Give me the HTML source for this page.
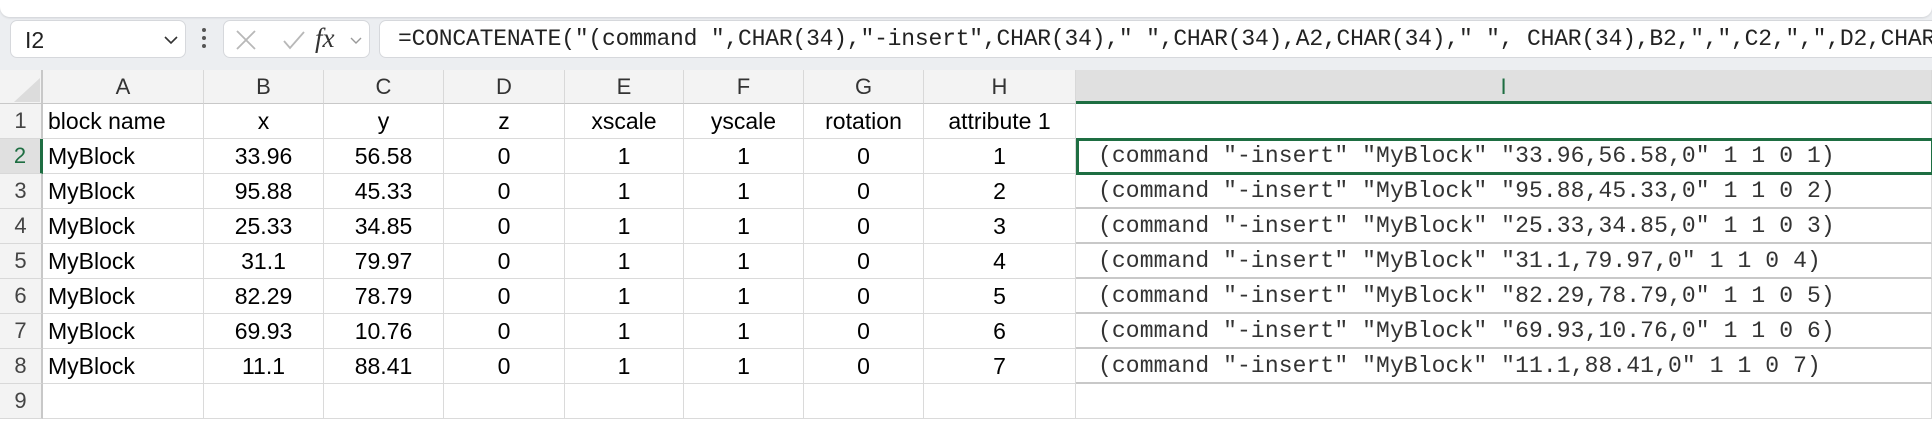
<!DOCTYPE html>
<html><head><meta charset="utf-8"><style>
*{box-sizing:border-box;margin:0;padding:0}
body{width:1932px;height:421px;overflow:hidden;background:#eceef1;font-family:"Liberation Sans",sans-serif;position:relative}
.topw{position:absolute;left:0;top:0;width:1932px;height:17px;background:#fff;border-radius:0 0 10px 10px;box-shadow:0 1px 2px rgba(0,0,0,.12)}
.box{position:absolute;top:20px;height:38px;background:#fff;border:1px solid #d6d8dc;border-radius:7px}
.grid{position:absolute;left:0;top:70px;width:1932px;height:351px;background:#fff}
.hdr{position:absolute;top:0;height:34px;background:#f3f3f3;border-right:1px solid #d8d8d8;border-bottom:1px solid #c8c8c8;text-align:center;font-size:22px;line-height:34px;color:#333}
.rh{position:absolute;left:0;width:43px;height:35px;background:#f3f3f3;border-right:2px solid #c8c8c8;border-bottom:1px solid #d8d8d8;text-align:center;font-size:22px;line-height:34px;color:#444}
.c{position:absolute;height:35px;border-right:1px solid #dadada;border-bottom:1px solid #dadada;font-size:23px;line-height:35px;color:#000;white-space:nowrap;text-align:center}
.m{font-family:"Liberation Mono",monospace;font-size:23px;color:#333;text-align:left;padding-left:22px;letter-spacing:0.1px}
</style></head><body>
<div class="topw"></div>
<div class="box" style="left:10px;width:176px"><span style="position:absolute;left:14px;top:6px;font-size:23px;color:#222">I2</span>
<svg style="position:absolute;left:152px;top:13px" width="16" height="12"><path d="M2 3l6 6 6-6" fill="none" stroke="#333" stroke-width="1.6"/></svg></div>
<div style="position:absolute;left:202px;top:28px;width:4px;height:22px">
<div style="width:4px;height:4px;background:#555;border-radius:2px;margin-bottom:4px"></div><div style="width:4px;height:4px;background:#555;border-radius:2px;margin-bottom:4px"></div><div style="width:4px;height:4px;background:#555;border-radius:2px"></div></div>
<div class="box" style="left:223px;width:147px">
<svg style="position:absolute;left:10px;top:6px" width="130" height="26"><path d="M3 4l18 18M21 4L3 22" stroke="#b8b8b8" stroke-width="1.8" fill="none"/><path d="M50 14l6 7 14-16" stroke="#b8b8b8" stroke-width="1.8" fill="none"/><path d="M117 11l5 5 5-5" stroke="#999" stroke-width="1.4" fill="none"/></svg>
<span style="position:absolute;left:91px;top:2px;font-family:'Liberation Serif',serif;font-style:italic;font-size:27px;color:#333">fx</span></div>
<div class="box" style="left:379px;width:1560px;border-radius:7px 0 0 7px;overflow:hidden"><span style="position:absolute;left:18px;top:5px;font-family:'Liberation Mono',monospace;font-size:23px;letter-spacing:-0.2px;color:#222;white-space:nowrap">=CONCATENATE("(command ",CHAR(34),"-insert",CHAR(34)," ",CHAR(34),A2,CHAR(34)," ", CHAR(34),B2,",",C2,",",D2,CHAR(34)," ",E2," ",F2," ",G2," ",H2,")")</span></div>
<div class="grid">
<div class="hdr" style="left:0;width:43px;border-right:2px solid #c8c8c8"><svg style="position:absolute;left:14px;top:8px" width="26" height="24"><path d="M26 0V24H0Z" fill="#dcdcdc"/></svg></div>
<div class="hdr" style="left:43px;width:161px">A</div>
<div class="hdr" style="left:204px;width:120px">B</div>
<div class="hdr" style="left:324px;width:120px">C</div>
<div class="hdr" style="left:444px;width:121px">D</div>
<div class="hdr" style="left:565px;width:119px">E</div>
<div class="hdr" style="left:684px;width:120px">F</div>
<div class="hdr" style="left:804px;width:120px">G</div>
<div class="hdr" style="left:924px;width:152px">H</div>
<div class="hdr" style="left:1076px;width:856px;background:#e0e0e0;border-bottom:3px solid #1e6e42;color:#1e6e42">I</div>
<div id="rows"></div>
</div>
<script>
var d=[["block name","x","y","z","xscale","yscale","rotation","attribute 1",""],
["MyBlock","33.96","56.58","0","1","1","0","1",'(command "-insert" "MyBlock" "33.96,56.58,0" 1 1 0 1)'],
["MyBlock","95.88","45.33","0","1","1","0","2",'(command "-insert" "MyBlock" "95.88,45.33,0" 1 1 0 2)'],
["MyBlock","25.33","34.85","0","1","1","0","3",'(command "-insert" "MyBlock" "25.33,34.85,0" 1 1 0 3)'],
["MyBlock","31.1","79.97","0","1","1","0","4",'(command "-insert" "MyBlock" "31.1,79.97,0" 1 1 0 4)'],
["MyBlock","82.29","78.79","0","1","1","0","5",'(command "-insert" "MyBlock" "82.29,78.79,0" 1 1 0 5)'],
["MyBlock","69.93","10.76","0","1","1","0","6",'(command "-insert" "MyBlock" "69.93,10.76,0" 1 1 0 6)'],
["MyBlock","11.1","88.41","0","1","1","0","7",'(command "-insert" "MyBlock" "11.1,88.41,0" 1 1 0 7)'],
["","","","","","","","",""]];
var xs=[43,204,324,444,565,684,804,924,1076,1932];
var h="";
for(var r=0;r<9;r++){var t=34+r*35;
h+='<div class="rh" style="top:'+t+'px;'+(r==1?'color:#1e6e42;background:#e0e0e0;border-right:3px solid #1e6e42':'')+'">'+(r+1)+'</div>';
for(var c=0;c<9;c++){var s='left:'+xs[c]+'px;top:'+t+'px;width:'+(xs[c+1]-xs[c])+'px;';
var cl='c';if(c==0)s+='text-align:left;padding-left:5px;';
if(c==8){cl='c m';if(r>=2&&r<=7)s+='border-bottom:2px solid #c8c8c8;';}
h+='<div class="'+cl+'" style="'+s+'">'+d[r][c].replace(/"/g,'&quot;')+'</div>';}}
h+='<div style="position:absolute;left:1076px;top:68px;width:858px;height:37px;border:3px solid #1e6e42"></div>';
document.getElementById("rows").innerHTML=h;
</script>
</body></html>
